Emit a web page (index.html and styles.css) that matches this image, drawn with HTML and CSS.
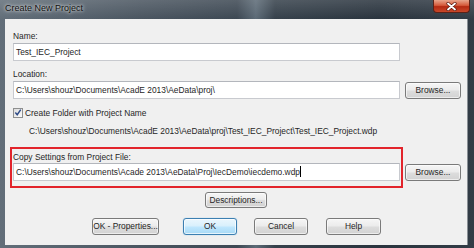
FILE: index.html
```html
<!DOCTYPE html>
<html>
<head>
<meta charset="utf-8">
<link rel="stylesheet" href="styles.css">
</head>
<body>
<div class="window">
  <div class="titlebar">
    <span class="title">Create New Project</span>
    <div class="close"><svg width="11" height="9" viewBox="0 0 11 9"><path d="M2 1.5 L9 7.5 M9 1.5 L2 7.5" stroke="#5a1a10" stroke-width="3.2" stroke-linecap="round"/><path d="M2 1.5 L9 7.5 M9 1.5 L2 7.5" stroke="#fff" stroke-width="1.8" stroke-linecap="round"/></svg></div>
  </div>
  <div class="frame">
    <div class="client">
      <div class="label">Name:</div>
      <div class="input wide">Test_IEC_Project</div>
      <div class="label gap7">Location:</div>
      <div class="row">
        <div class="input wide">C:\Users\shouz\Documents\AcadE 2013\AeData\proj\</div>
        <div class="btn browse">Browse...</div>
      </div>
      <div class="checkrow">
        <div class="checkbox"><svg width="9" height="9" viewBox="0 0 9 9"><path d="M1.5 4.5 L3.6 7 L7.6 1.2" fill="none" stroke="#2d4a86" stroke-width="1.6"/></svg></div>
        <span>Create Folder with Project Name</span>
      </div>
      <div class="path">C:\Users\shouz\Documents\AcadE 2013\AeData\proj\Test_IEC_Project\Test_IEC_Project.wdp</div>
      <div class="row copyrow">
        <div class="redbox">
          <div class="label redlabel">Copy Settings from Project File:</div>
          <div class="input wide">C:\Users\shouz\Documents\Acade 2013\AeData\Proj\IecDemo\iecdemo.wdp<span class="caret"></span></div>
        </div>
        <div class="btn browse browse2">Browse...</div>
      </div>
      <div class="descrow"><div class="btn desc">Descriptions...</div></div>
      <div class="buttons">
        <div class="btn okprops">OK - Properties...</div>
        <div class="btn ok">OK</div>
        <div class="btn cancel">Cancel</div>
        <div class="btn help">Help</div>
      </div>
    </div>
  </div>
</div>
</body>
</html>
```
FILE: styles.css
```css
html, body {
  margin: 0;
  padding: 0;
}
body {
  width: 474px;
  height: 248px;
  overflow: hidden;
  font-family: "Liberation Sans", Arial, sans-serif;
  font-size: 8.4px;
  color: #262626;
  background: #36414c;
}
.window {
  width: 474px;
  height: 248px;
  display: flex;
  flex-direction: column;
  background: linear-gradient(90deg, #626e79 0%, #4a5560 30%, #3d4853 50%, #5c6a76 54%, #36414b 58%, #2a343e 80%, #323c46 100%);
}
.titlebar {
  height: 19px;
  display: flex;
  justify-content: space-between;
  align-items: flex-start;
  background: linear-gradient(180deg, rgba(255,255,255,0.14), rgba(255,255,255,0) 100%);
}
.title {
  margin-left: 5px;
  margin-top: 3px;
  font-size: 9px;
  line-height: 11px;
  color: #111;
  text-shadow: 0 0 3px rgba(255,255,255,0.85), 0 0 5px rgba(255,255,255,0.6);
}
.close {
  width: 37px;
  height: 13px;
  margin-right: 4px;
  box-sizing: border-box;
  border: 1px solid #5c2218;
  border-top: none;
  border-radius: 0 0 4px 4px;
  background: linear-gradient(180deg, #e8a58c 0%, #d55a3b 45%, #b52a12 55%, #c9482a 100%);
  display: flex;
  align-items: center;
  justify-content: center;
}
.frame {
  display: flex;
  padding-left: 5px;
}
.client {
  width: 463px;
  height: 226px;
  box-sizing: border-box;
  background: #f0f0f0;
  border-right: 1px solid #8a9096;
  padding: 11px 0 0 8px;
}
.label {
  height: 12px;
  line-height: 12px;
}
.gap7 {
  margin-top: 7px;
}
.input {
  height: 18px;
  line-height: 16px;
  box-sizing: border-box;
  border: 1px solid #c8cacf;
  border-top-color: #b3b6bc;
  background: #fff;
  padding-left: 2px;
  white-space: nowrap;
  overflow: hidden;
  margin-top: 1px;
}
.wide {
  width: 387px;
}
.row {
  display: flex;
  align-items: flex-end;
}
.row .input {
  margin-top: 1px;
}
.btn {
  height: 17px;
  box-sizing: border-box;
  border: 1px solid #7a7a7a;
  border-radius: 3px;
  background: linear-gradient(180deg, #f6f6f6 0%, #ececec 45%, #dcdcdc 55%, #d2d2d2 100%);
  text-align: center;
  line-height: 15px;
  white-space: nowrap;
  box-shadow: inset 0 0 0 1px rgba(255,255,255,0.6);
}
.browse {
  width: 56px;
  margin-left: 5px;
}
.checkrow {
  margin-top: 7px;
  height: 13px;
  display: flex;
  align-items: center;
}
.checkbox {
  width: 10px;
  height: 10px;
  box-sizing: border-box;
  border: 1px solid #8e8f8f;
  background: linear-gradient(135deg, #dcdcdc, #fbfbfb);
  display: flex;
  align-items: center;
  justify-content: center;
  margin-right: 2px;
}
.path {
  margin-top: 6px;
  height: 12px;
  line-height: 12px;
  padding-left: 16px;
  white-space: nowrap;
}
.copyrow {
  margin-top: 10px;
}
.redbox {
  margin-left: -3px;
  width: 393px;
  box-sizing: border-box;
  border: 2px solid #e2242b;
  padding: 2px 1px 5px 1px;
}
.redbox .input {
  margin-top: 0;
}
.browse2 {
  margin-left: 2px;
  margin-bottom: 7px;
}
.caret {
  display: inline-block;
  width: 1px;
  height: 11px;
  background: #000;
  vertical-align: -2px;
}
.descrow {
  margin-top: 4px;
  padding-left: 192px;
  display: flex;
}
.desc {
  width: 62px;
  height: 16px;
  line-height: 14px;
}
.buttons {
  margin-top: 10px;
  padding-left: 79px;
  display: flex;
}
.okprops {
  width: 67px;
}
.ok {
  width: 54px;
  margin-left: 24px;
  border-color: #3c7fb1;
  background: linear-gradient(180deg, #eaf6fd 0%, #d9f0fc 45%, #bee6fd 55%, #a7d9f5 100%);
  box-shadow: inset 0 0 0 1px rgba(255,255,255,0.7), 0 0 1px #6ab4e6;
}
.cancel {
  width: 54px;
  margin-left: 17px;
}
.help {
  width: 55px;
  margin-left: 18px;
}
```
